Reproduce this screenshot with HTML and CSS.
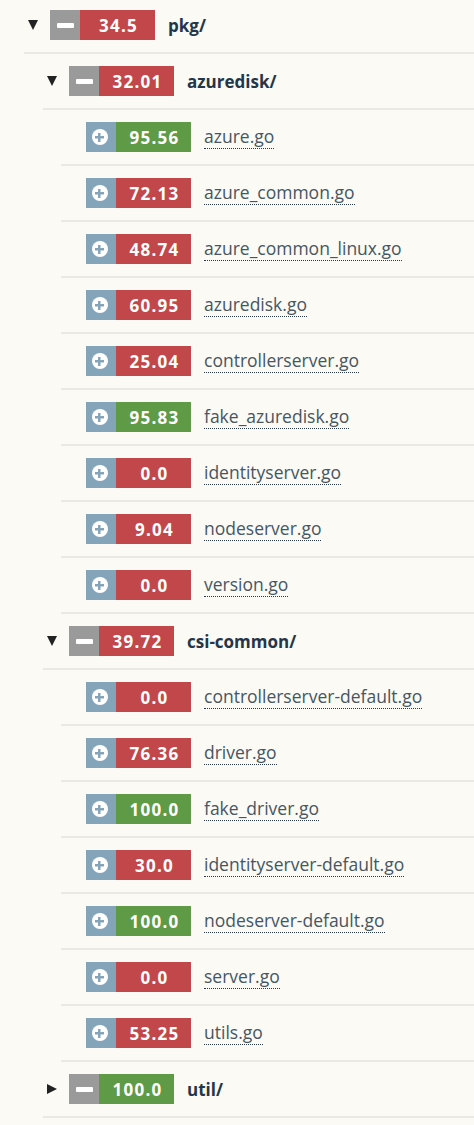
FILE: index.html
```html
<!DOCTYPE html>
<html>
<head>
<meta charset="utf-8">
<link rel="stylesheet" href="styles.css">
</head>
<body>
<ul class="tree">
  <li class="dir">
    <div class="row"><span class="tri down"></span><span class="badge"><span class="ico minus"></span><span class="num red">34.5</span></span><span class="dname">pkg/</span></div>
    <ul class="children">
      <li class="dir">
        <div class="row"><span class="tri down"></span><span class="badge"><span class="ico minus"></span><span class="num red">32.01</span></span><span class="dname">azuredisk/</span></div>
        <ul class="children">
          <li class="row file"><span class="badge"><span class="ico plus"></span><span class="num green">95.56</span></span><a class="fname">azure.go</a></li>
          <li class="row file"><span class="badge"><span class="ico plus"></span><span class="num red">72.13</span></span><a class="fname">azure_common.go</a></li>
          <li class="row file"><span class="badge"><span class="ico plus"></span><span class="num red">48.74</span></span><a class="fname">azure_common_linux.go</a></li>
          <li class="row file"><span class="badge"><span class="ico plus"></span><span class="num red">60.95</span></span><a class="fname">azuredisk.go</a></li>
          <li class="row file"><span class="badge"><span class="ico plus"></span><span class="num red">25.04</span></span><a class="fname">controllerserver.go</a></li>
          <li class="row file"><span class="badge"><span class="ico plus"></span><span class="num green">95.83</span></span><a class="fname">fake_azuredisk.go</a></li>
          <li class="row file"><span class="badge"><span class="ico plus"></span><span class="num red">0.0</span></span><a class="fname">identityserver.go</a></li>
          <li class="row file"><span class="badge"><span class="ico plus"></span><span class="num red">9.04</span></span><a class="fname">nodeserver.go</a></li>
          <li class="row file"><span class="badge"><span class="ico plus"></span><span class="num red">0.0</span></span><a class="fname">version.go</a></li>
        </ul>
      </li>
      <li class="dir">
        <div class="row"><span class="tri down"></span><span class="badge"><span class="ico minus"></span><span class="num red">39.72</span></span><span class="dname">csi-common/</span></div>
        <ul class="children">
          <li class="row file"><span class="badge"><span class="ico plus"></span><span class="num red">0.0</span></span><a class="fname">controllerserver-default.go</a></li>
          <li class="row file"><span class="badge"><span class="ico plus"></span><span class="num red">76.36</span></span><a class="fname">driver.go</a></li>
          <li class="row file"><span class="badge"><span class="ico plus"></span><span class="num green">100.0</span></span><a class="fname">fake_driver.go</a></li>
          <li class="row file"><span class="badge"><span class="ico plus"></span><span class="num red">30.0</span></span><a class="fname">identityserver-default.go</a></li>
          <li class="row file"><span class="badge"><span class="ico plus"></span><span class="num green">100.0</span></span><a class="fname">nodeserver-default.go</a></li>
          <li class="row file"><span class="badge"><span class="ico plus"></span><span class="num red">0.0</span></span><a class="fname">server.go</a></li>
          <li class="row file"><span class="badge"><span class="ico plus"></span><span class="num red">53.25</span></span><a class="fname">utils.go</a></li>
        </ul>
      </li>
      <li class="dir">
        <div class="row"><span class="tri right"></span><span class="badge"><span class="ico minus"></span><span class="num green">100.0</span></span><span class="dname">util/</span></div>
      </li>
    </ul>
  </li>
</ul>
</body>
</html>
```

FILE: styles.css
```css
html, body {
  margin: 0;
  padding: 0;
  background: #fbfaf5;
}
body {
  font-family: "Open Sans", "DejaVu Sans", sans-serif;
  width: 474px;
  overflow: hidden;
}
ul {
  list-style: none;
  margin: 0;
  padding: 0;
}
.tree {
  margin-top: -2px;
  padding-left: 24px;
}
.children {
  padding-left: 19px;
}
.children .children {
  padding-left: 18px;
}
.row {
  display: flex;
  align-items: center;
  height: 54px;
  border-bottom: 2px solid #ebe9e3;
  padding-left: 4px;
}
.file {
  padding-left: 25px;
}
.tri {
  width: 0;
  height: 0;
  margin-right: 12px;
}
.tri.down {
  border-left: 5px solid transparent;
  border-right: 5px solid transparent;
  border-top: 10px solid #222;
}
.tri.right {
  border-top: 5px solid transparent;
  border-bottom: 5px solid transparent;
  border-left: 10px solid #222;
}
.badge {
  display: flex;
  height: 30px;
  width: 105px;
  flex: none;
}
.ico {
  width: 30px;
  height: 30px;
  display: flex;
  align-items: center;
  justify-content: center;
}
.ico.minus {
  background: #9a9a9a;
}
.ico.minus::before {
  content: "";
  width: 17px;
  height: 5px;
  background: #fff;
  border-radius: 1px;
}
.ico.plus {
  background: #84a4b9;
}
.ico.plus::before {
  content: "";
  width: 16px;
  height: 16px;
  border-radius: 50%;
  margin-left: -3px;
  background:
    linear-gradient(#84a4b9, #84a4b9) center / 9px 2.5px no-repeat,
    linear-gradient(#84a4b9, #84a4b9) center / 2.5px 9px no-repeat,
    #fff;
}
.num {
  flex: 1;
  display: flex;
  align-items: center;
  justify-content: center;
  color: #fff;
  font-weight: 700;
  font-size: 17px;
  letter-spacing: 1.3px;
  padding-left: 2px;
}
.num.red {
  background: #c2474a;
}
.num.green {
  background: #5f9a47;
}
.dname {
  margin-left: 13px;
  font-weight: 700;
  font-size: 17px;
  color: #23364a;
}
.fname {
  margin-left: 13px;
  font-size: 17.5px;
  color: #465663;
  line-height: 21px;
  border-bottom: 1px dotted #2a3a4a;
  padding-bottom: 1px;
}
```
